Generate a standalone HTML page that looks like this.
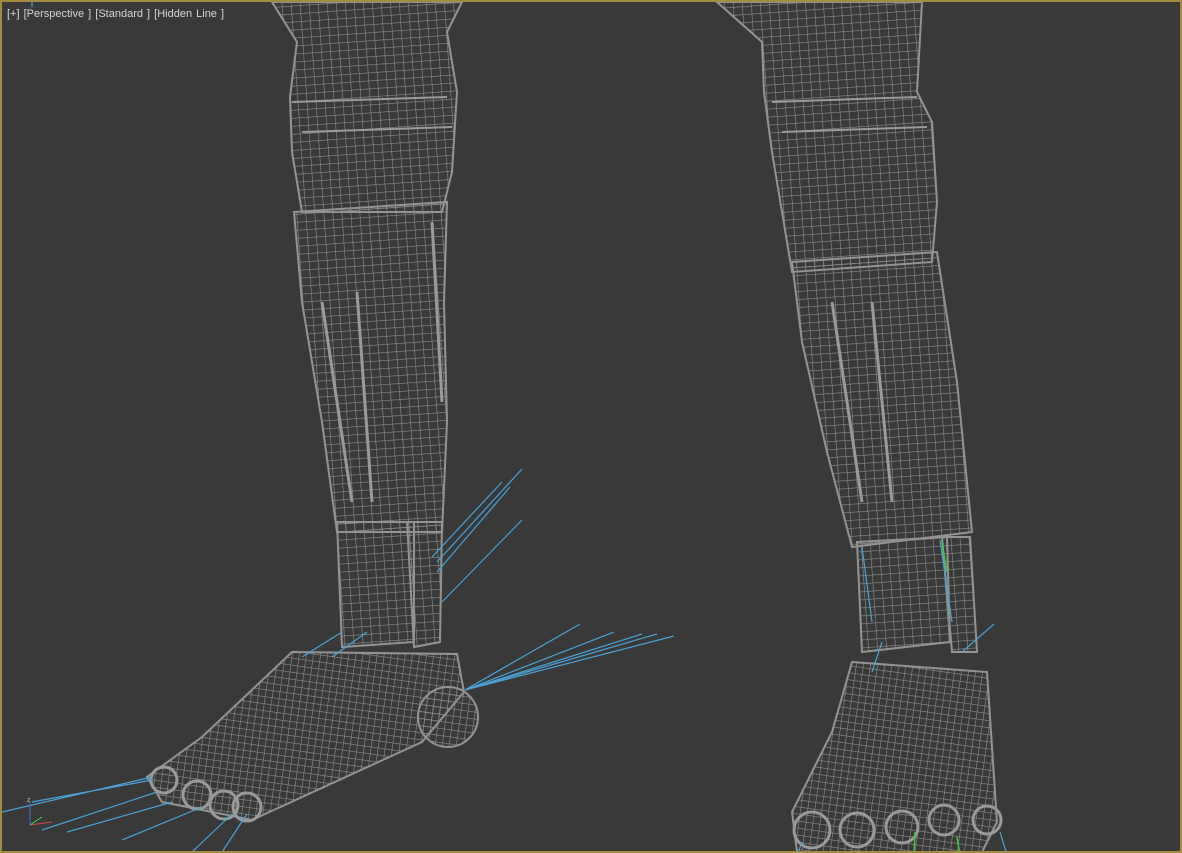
<!DOCTYPE html>
<html><head><style>
html,body{margin:0;padding:0;background:#393939;}
#v{position:relative;width:1182px;height:853px;overflow:hidden;background:#393939;box-sizing:border-box;border:2px solid #a38c3c;}
#lbl{position:absolute;left:5px;top:6px;font:11px "Liberation Sans",sans-serif;color:#d6d6d6;word-spacing:1px;}
svg{position:absolute;left:0;top:0;}
</style></head><body>
<div id="v">
<svg width="1182" height="853" viewBox="0 0 1182 853">
<defs>
<pattern id="g" width="9" height="8" patternUnits="userSpaceOnUse" patternTransform="rotate(-4)">
<path d="M0 0H9M0 0V8" stroke="#8f8f8f" stroke-width="1.2" fill="none"/>
</pattern>
<pattern id="g2" width="7" height="7" patternUnits="userSpaceOnUse" patternTransform="rotate(8)">
<path d="M0 0H7M0 0V7" stroke="#8f8f8f" stroke-width="1.2" fill="none"/>
</pattern>
</defs>
<g stroke="#939393" stroke-width="2" fill="url(#g)">
<path d="M270 0 L460 0 L445 30 L455 90 L450 170 L440 210 L300 210 L290 150 L288 95 L295 40 Z"/>
<path d="M292 210 L445 200 L442 300 L445 420 L440 530 L335 530 L320 420 L300 300 Z"/>
<path d="M335 520 L412 520 L412 640 L340 645 Z"/>
<path d="M405 520 L440 520 L438 640 L412 645 Z"/>
<path d="M290 650 L455 652 L462 690 L420 740 L250 818 L160 800 L145 775 L200 735 Z" fill="url(#g2)"/>
<circle cx="446" cy="715" r="30" fill="url(#g2)"/>
<path d="M715 0 L920 0 L915 90 L930 120 L935 200 L930 260 L790 270 L770 150 L762 90 L760 40 Z"/>
<path d="M790 260 L935 250 L955 380 L970 530 L850 545 L825 450 L800 340 Z"/>
<path d="M855 540 L945 535 L948 640 L860 650 Z"/>
<path d="M940 535 L968 535 L975 650 L950 650 Z"/>
<path d="M850 660 L985 670 L995 820 L980 850 L795 850 L790 810 L830 730 Z" fill="url(#g2)"/>
</g>
<g fill="none" stroke="#9a9a9a" stroke-width="3">
<circle cx="810" cy="828" r="18"/><circle cx="855" cy="828" r="17"/><circle cx="900" cy="825" r="16"/><circle cx="942" cy="818" r="15"/><circle cx="985" cy="818" r="14"/>
<circle cx="162" cy="778" r="13"/><circle cx="195" cy="793" r="14"/><circle cx="222" cy="803" r="14"/><circle cx="245" cy="805" r="14"/>
<path d="M320 300 L350 500 M355 290 L370 500 M430 220 L440 400 M830 300 L860 500 M870 300 L890 500"/>
<path d="M290 100 L445 95 M300 130 L450 125 M770 100 L915 95 M780 130 L925 125" stroke-width="2"/>
</g>
<g stroke="#4aa3d8" stroke-width="1.2">
<path d="M463 688 L578 622 M463 688 L612 630 M463 688 L640 632 M463 688 L672 634 M463 688 L655 632"/>
<path d="M435 560 L520 467 M435 570 L508 485 M440 600 L520 518 M430 555 L500 480"/>
<path d="M150 775 L0 810 M155 790 L40 828 M170 800 L65 830 M200 805 L120 838 M230 812 L190 850 M245 812 L220 850 M150 778 L30 800"/>
<path d="M300 655 L340 630 M330 655 L365 630 M960 650 L992 622 M870 670 L880 640"/>
<path d="M860 545 L870 620 M938 538 L950 620 M800 840 L795 853 M998 830 L1005 853"/>
<path d="M30 0 L30 5"/>
</g>
<g stroke="#3fc73f" stroke-width="1.5"><path d="M940 540 L945 570 M913 830 L912 853 M955 835 L958 853"/></g>
<g stroke-width="1"><path d="M28 823 L28 800" stroke="#4a6ad8"/><path d="M28 823 L50 820" stroke="#d84a4a"/><path d="M28 823 L40 815" stroke="#4ad84a"/></g>
<text x="25" y="800" font-family="Liberation Sans" font-size="7" fill="#ccc">z</text>
</svg>
<div id="lbl">[+] [Perspective ] [Standard ] [Hidden Line ]</div>
</div>
</body></html>
